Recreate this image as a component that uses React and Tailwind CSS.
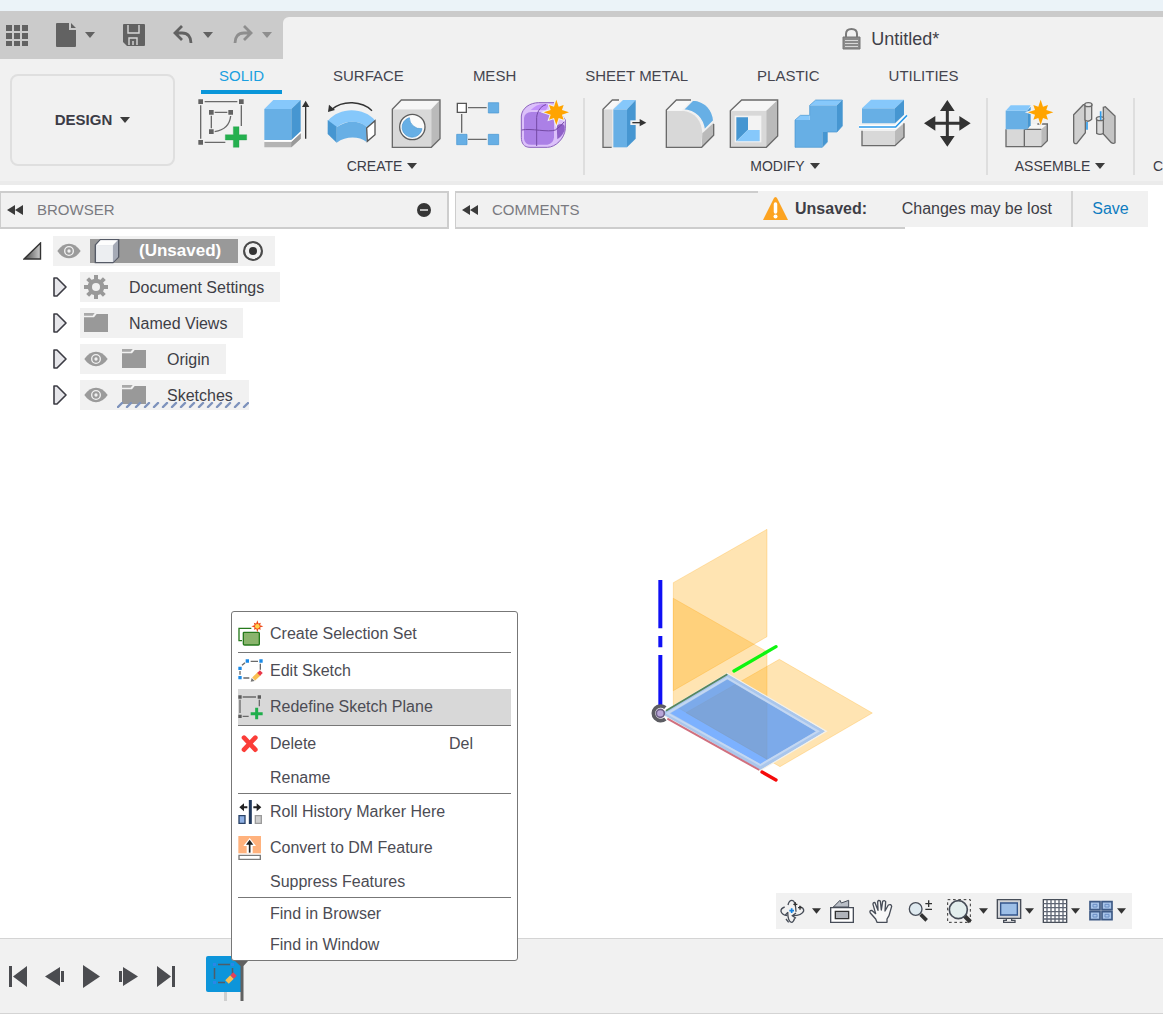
import { useState } from 'react';

const BLUE = '#67afe5';
const BLUE_LIGHT = '#86c8fb';
const BLUE_DARK = '#4696d1';
const EDGE = '#6a6a6a';

function Caret({ className = 'w-[10px] h-[6px] text-[#3c3c3c]' }) {
  return (
    <svg viewBox="0 0 10 6" className={className} aria-hidden="true">
      <path d="M0 0H10L5 6Z" fill="currentColor" />
    </svg>
  );
}

// Large ribbon icon, drawn on a 144 unit grid
function RibbonIcon({ children }) {
  return (
    <svg viewBox="0 0 144 144" className="w-12 h-12 overflow-visible" fill="none" aria-hidden="true">
      {children}
    </svg>
  );
}

// Small icon, drawn on a 72 unit grid
function SmallIcon({ children }) {
  return (
    <svg viewBox="0 0 72 72" className="w-6 h-6 shrink-0 overflow-visible" fill="none" aria-hidden="true">
      {children}
    </svg>
  );
}

function starPoints(cx, cy, outer, inner, spikes) {
  const points = [];
  for (let i = 0; i < spikes * 2; i++) {
    const long = i % 4 === 0 ? outer : outer * 0.82;
    const r = i % 2 === 0 ? long : inner;
    const a = (Math.PI * i) / spikes - Math.PI / 2;
    points.push(`${(cx + r * Math.cos(a)).toFixed(1)},${(cy + r * Math.sin(a)).toFixed(1)}`);
  }
  return points.join(' ');
}

function Star({ cx, cy, r = 38 }) {
  return (
    <polygon
      points={starPoints(cx, cy, r, r * 0.48, 8)}
      fill="#ffa400"
      stroke="#f1f1f1"
      strokeWidth="6"
      paintOrder="stroke"
    />
  );
}

const SketchIcon = () => (
  <RibbonIcon>
    <path
      d="M20 11H118M8 22V122M130 22V84M20 133H82M50 43H88M40 53V91M98 54Q94 94 50 101"
      stroke={EDGE}
      strokeWidth="4"
    />
    <path
      d="M1 4h14v14h-14zM123 4h14v14h-14zM1 126h14v14h-14zM33 36h14v14h-14zM91 36h14v14h-14zM33 94h14v14h-14z"
      fill="#626262"
    />
    <path d="M106 86h17v24h23v16h-23v22h-17v-22h-24v-16h24z" fill="#25b04f" stroke="#1e9a43" strokeWidth="1" />
  </RibbonIcon>
);

const ExtrudeIcon = () => (
  <RibbonIcon>
    <path d="M7 132H88L116 104V122L88 148H7Z" fill="#b4b4b4" />
    <path d="M88 132L116 104V122L88 148Z" fill="#9a9a9a" />
    <path d="M7 128H88L118 101" stroke="#fff" strokeWidth="5" />
    <path d="M7 33H88V126H7Z" fill={BLUE} />
    <path d="M7 33L34 6H116L88 33Z" fill={BLUE_LIGHT} />
    <path d="M88 33L116 6V100L88 126Z" fill={BLUE_DARK} />
    <path d="M131 122V22" stroke="#333" strokeWidth="4" />
    <path d="M131 8L142 27H120Z" fill="#333" />
  </RibbonIcon>
);

const RevolveIcon = () => (
  <RibbonIcon>
    <path d="M138 38C108 8 50 6 18 34" stroke="#333" strokeWidth="4" />
    <path d="M6 42L9 20L27 36Z" fill="#333" />
    <path d="M6 68C40 26 114 26 148 68L124 88C98 66 60 66 32 88Z" fill={BLUE_LIGHT} />
    <path d="M32 88C60 66 98 66 122 86V132C98 114 60 114 32 134Z" fill={BLUE} />
    <path d="M5 66L32 86V134L5 108Z" fill={BLUE_DARK} />
    <path d="M122 90L147 68V110L124 130Z" fill="#fff" stroke="#555" strokeWidth="4" />
  </RibbonIcon>
);

const HoleIcon = () => (
  <RibbonIcon>
    <path d="M7 34H124V148H7Z" fill="#d8d8d8" />
    <path d="M7 34L34 6H150L124 34Z" fill="#f6f6f6" />
    <path d="M124 34L150 6V122L124 148Z" fill="#bababa" />
    <path d="M7 34L34 6H150V122L124 148H7Z" stroke={EDGE} strokeWidth="4" />
    <circle cx="67" cy="87" r="38" fill="#fafafa" stroke="#5c5c5c" strokeWidth="4" />
    <path d="M58 59A30 30 0 1 0 96 92A34 34 0 0 1 58 59Z" fill={BLUE} stroke={BLUE_DARK} strokeWidth="2" />
  </RibbonIcon>
);

const PatternIcon = () => (
  <RibbonIcon>
    <path d="M42 29H98M23 48V104M42 124H98" stroke={EDGE} strokeWidth="4" />
    <path d="M10 16h27v27h-27z" fill="#fff" stroke="#555" strokeWidth="4" />
    <path d="M103 14h31v31h-31zM8 109h31v31h-31zM103 109h31v31h-31z" fill={BLUE} stroke={BLUE_DARK} strokeWidth="2" />
  </RibbonIcon>
);

const FormIcon = () => (
  <RibbonIcon>
    <path
      d="M10 54C12 30 36 14 62 14H108L142 66V92C140 122 112 148 88 148H36C18 148 10 136 10 118Z"
      fill="#dcc1fa"
      stroke="#8b62bd"
      strokeWidth="3"
    />
    <path d="M38 36Q56 18 74 18H94L84 36Z" fill="#c290fb" />
    <path d="M116 82Q138 72 140 86V96Q134 114 118 124Z" fill="#8f60c8" />
    <path d="M18 60Q20 44 40 42H88Q106 44 108 62V118Q106 138 88 140H40Q20 140 18 122Z" fill="#ab80e6" />
    <path d="M56 144V66C54 46 66 24 84 20M11 96C40 90 90 104 112 96Q130 84 138 72" stroke="#744aa4" strokeWidth="3" />
    <Star cx={115} cy={43} />
  </RibbonIcon>
);

const PressPullIcon = () => (
  <RibbonIcon>
    <path d="M6 34H34V148H6Z" fill="#d8d8d8" />
    <path d="M6 34L34 6H58L34 34Z" fill="#f8f8f8" />
    <path d="M54 6H34L6 34V148H32" stroke={EDGE} strokeWidth="4" />
    <path d="M37 34H78V148H37Z" fill={BLUE} />
    <path d="M37 34L66 6H104L78 34Z" fill={BLUE_LIGHT} />
    <path d="M78 34L104 6V122L78 148Z" fill={BLUE_DARK} />
    <path d="M88 74H118" stroke="#f1f1f1" strokeWidth="14" />
    <path d="M94 74H120" stroke="#333" strokeWidth="4" />
    <path d="M136 74L116 63V85Z" fill="#333" />
  </RibbonIcon>
);

const FilletIcon = () => (
  <RibbonIcon>
    <path d="M4 38H52C92 42 110 70 112 106L108 148H4Z" fill="#d8d8d8" />
    <path d="M4 38L34 6H80L52 38Z" fill="#f8f8f8" />
    <path d="M112 106L146 74V112L110 148Z" fill="#bababa" />
    <path d="M78 6H34L4 36V148H110L146 112V78" stroke={EDGE} strokeWidth="4" />
    <path d="M54 36L84 6C122 8 144 38 146 68L118 96C114 62 92 38 54 36Z" fill={BLUE} stroke="#f1f1f1" strokeWidth="4" />
  </RibbonIcon>
);

const ShellIcon = () => (
  <RibbonIcon>
    <path d="M4 38H112V148H4Z" fill="#d8d8d8" />
    <path d="M4 38L38 6H146L112 38Z" fill="#f6f6f6" />
    <path d="M112 38L146 6V114L112 148Z" fill="#bababa" />
    <path d="M4 38L38 6H146V114L112 148H4Z" stroke={EDGE} strokeWidth="4" />
    <path d="M17 53H97V133H17Z" fill="#f3f3f3" />
    <path d="M22 58H57V95L22 130Z" fill={BLUE_DARK} />
    <path d="M22 130L56 96H92V130Z" fill={BLUE_LIGHT} />
  </RibbonIcon>
);

const CombineIcon = () => (
  <RibbonIcon>
    <path d="M6 66H50V22H132V102H88V148H6Z" fill={BLUE} />
    <path d="M50 22L68 6H148L132 22ZM6 66L22 52H50V66Z" fill={BLUE_LIGHT} />
    <path d="M132 22L148 6V84L132 102ZM88 102H103V132L88 148Z" fill={BLUE_DARK} />
    <path d="M6 66L22 52H50V22L68 6H148V84L132 102H103V132L88 148H6Z" stroke={BLUE_DARK} strokeWidth="2" />
  </RibbonIcon>
);

const SplitIcon = () => (
  <RibbonIcon>
    <path d="M15 31H114V76H15Z" fill={BLUE} />
    <path d="M15 31L42 5H141L114 31Z" fill={BLUE_LIGHT} />
    <path d="M114 31L141 5V50L114 76Z" fill={BLUE_DARK} />
    <path d="M6 87H116L150 52" stroke="#fff" strokeWidth="12" />
    <path d="M6 87H116L150 52" stroke="#2f9bea" strokeWidth="5" />
    <path d="M15 99H114V143H15Z" fill="#d8d8d8" />
    <path d="M114 99L141 76V118L114 143Z" fill="#bababa" />
    <path d="M15 98V143H114L141 118V76" stroke={EDGE} strokeWidth="4" />
  </RibbonIcon>
);

const MoveIcon = () => (
  <RibbonIcon>
    <path d="M79 30V122M33 76H125" stroke="#333" strokeWidth="9" />
    <path d="M79 6L101 39H57ZM79 146L101 114H57ZM9 76L43 54V98ZM149 76L115 54V98Z" fill="#333" />
  </RibbonIcon>
);

const ComponentIcon = () => (
  <RibbonIcon>
    <path d="M6 94H60V146H6ZM62 94H112V146H62Z" fill="#d8d8d8" />
    <path d="M62 94L78 78H130L112 94Z" fill="#f6f6f6" />
    <path d="M112 94L130 78V128L112 146Z" fill="#bababa" />
    <path d="M6 94V146H112L130 128V78H100M61 94V146M62 94H112" stroke={EDGE} strokeWidth="4" />
    <path d="M5 38H70V94H5Z" fill={BLUE} />
    <path d="M5 38L20 22H80L70 38Z" fill={BLUE_LIGHT} />
    <path d="M70 38L80 26V82L70 94Z" fill={BLUE_DARK} />
    <Star cx={110} cy={43} />
  </RibbonIcon>
);

const JointIcon = () => (
  <RibbonIcon>
    <path d="M17 50L46 20H52V104L26 137Q17 138 17 130Z" fill="#cfcfcf" stroke={EDGE} strokeWidth="4" />
    <path d="M51 22V66Q61 74 71 64V20Z" fill="#dadada" stroke={EDGE} strokeWidth="4" />
    <ellipse cx="61" cy="20" rx="11" ry="6" fill="#e8e8e8" stroke={EDGE} strokeWidth="4" />
    <path d="M106 28L112 26L141 54V134Q136 138 130 134L106 108Z" fill="#c4c4c4" stroke={EDGE} strokeWidth="4" />
    <path d="M86 64V106Q96 112 106 106V64Z" fill="#dadada" stroke={EDGE} strokeWidth="4" />
    <ellipse cx="96" cy="62" rx="11" ry="6" fill="#e8e8e8" stroke={EDGE} strokeWidth="4" />
    <path d="M57 72V95M98 40V66" stroke="#2f9bea" strokeWidth="5" />
  </RibbonIcon>
);

const tabs = ['SOLID', 'SURFACE', 'MESH', 'SHEET METAL', 'PLASTIC', 'UTILITIES'];

const groups = [
  {
    label: 'CREATE',
    tools: [
      ['Create Sketch', SketchIcon],
      ['Extrude', ExtrudeIcon],
      ['Revolve', RevolveIcon],
      ['Hole', HoleIcon],
      ['Pattern', PatternIcon],
      ['Create Form', FormIcon],
    ],
  },
  {
    label: 'MODIFY',
    tools: [
      ['Press Pull', PressPullIcon],
      ['Fillet', FilletIcon],
      ['Shell', ShellIcon],
      ['Combine', CombineIcon],
      ['Split Body', SplitIcon],
      ['Move', MoveIcon],
    ],
  },
  {
    label: 'ASSEMBLE',
    tools: [
      ['New Component', ComponentIcon],
      ['Joint', JointIcon],
    ],
  },
];

function QuickAccess() {
  return (
    <div className="w-[283px] shrink-0 flex items-center pl-[6px] text-[#626262]">
      <button type="button" aria-label="Show data panel">
        <svg viewBox="0 0 22 22" className="w-[22px] h-[22px]" fill="currentColor">
          <path d="M0 1h6v6h-6zM8 1h6v6h-6zM16 1h6v6h-6zM0 9h6v6h-6zM8 9h6v6h-6zM16 9h6v6h-6zM0 17h6v5h-6zM8 17h6v5h-6zM16 17h6v5h-6z" />
        </svg>
      </button>
      <button type="button" aria-label="File" className="ml-7 flex items-center gap-[9px]">
        <svg viewBox="0 0 20 24" className="w-5 h-6" fill="currentColor">
          <path d="M1 0H13V7H20V23Q20 24 19 24H1Q0 24 0 23V1Q0 0 1 0ZM15 0L20 5H15Z" />
        </svg>
        <Caret className="w-[10px] h-2" />
      </button>
      <button type="button" aria-label="Save file" className="ml-7">
        <svg viewBox="0 0 22 22" className="w-[22px] h-[22px]" fill="currentColor">
          <path d="M1 0H21Q22 0 22 1V21Q22 22 21 22H4L0 18V1Q0 0 1 0Z" />
          <path d="M5 1V9H16V1M6 21V14H14V21" fill="none" stroke="#d8d8d8" strokeWidth="1.4" />
          <path d="M10 17V21" stroke="#d8d8d8" strokeWidth="1.4" />
        </svg>
      </button>
      <button type="button" aria-label="Undo" className="ml-7 flex items-center gap-[10px]">
        <svg viewBox="0 0 20 20" className="w-5 h-5" fill="none" stroke="currentColor" strokeWidth="2.8">
          <path d="M9 1L2 8L9 15M2 8H9C15 8 18 12 18 18" />
        </svg>
        <Caret className="w-[10px] h-2" />
      </button>
      <button type="button" aria-label="Redo" className="ml-5 flex items-center gap-[9px] text-[#8e8e8e]">
        <svg viewBox="0 0 20 20" className="w-5 h-5" fill="none" stroke="currentColor" strokeWidth="2.8">
          <path d="M11 1L18 8L11 15M18 8H11C5 8 2 12 2 18" />
        </svg>
        <Caret className="w-[10px] h-2" />
      </button>
    </div>
  );
}

function TitleBar() {
  return (
    <div className="flex h-12 bg-[#cbcbcb]">
      <QuickAccess />
      <div className="flex-1 mt-[6px] bg-[#f1f1f1] rounded-tl-md flex items-center pb-0.5 pt-1">
        <div className="flex-[5]" />
        <div className="flex items-center gap-[10px] text-[#404048] text-[18px] leading-6">
          <svg viewBox="0 0 19 22" className="w-[19px] h-[22px]" fill="none" aria-hidden="true">
            <path d="M4 10V6Q4 1 9.500 1Q15 1 15 6V10" stroke="#7a7a7a" strokeWidth="2" />
            <path d="M1 9H18V21H1Z" fill="#8a8a8a" stroke="#767676" />
            <path d="M3 12.500H16M3 15.500H16M3 18.500H16" stroke="#d8d8d8" />
          </svg>
          <h1>Untitled*</h1>
        </div>
        <div className="flex-[2]" />
      </div>
    </div>
  );
}

function Ribbon() {
  const [activeTab, setActiveTab] = useState('SOLID');

  return (
    <div className="flex h-[122px] overflow-hidden">
      <button
        type="button"
        className="ml-[10px] mt-[15px] w-[165px] h-[92px] shrink-0 border-2 border-[#dfdfdf] rounded-lg flex items-center justify-center gap-2 text-[15px] font-bold text-[#3c3c46]"
      >
        DESIGN
        <Caret />
      </button>
      <div className="ml-[23px] min-w-0">
        <div role="tablist" className="flex gap-[33px] ml-[3px] h-[35px] whitespace-nowrap">
          {tabs.map((tab) => (
            <button
              key={tab}
              type="button"
              role="tab"
              aria-selected={tab === activeTab}
              onClick={() => setActiveTab(tab)}
              className={
                tab === activeTab
                  ? 'px-[18px] pt-1 text-[15px] text-[#1a9fe0] border-b-4 border-[#0a96d9]'
                  : 'px-[18px] pt-1 text-[15px] text-[#45454f] border-b-4 border-transparent'
              }
            >
              {tab}
            </button>
          ))}
        </div>
        <div className="flex mt-1 text-[14px] leading-4 text-[#3c3c46]">
          {groups.map(({ label, tools }) => (
            <div key={label} className="flex shrink-0">
              <div className="flex flex-col items-center">
                <div className="flex gap-4">
                  {tools.map(([name, Icon]) => (
                    <button key={name} type="button" aria-label={name}>
                      <Icon />
                    </button>
                  ))}
                </div>
                <button type="button" className="mt-3 flex items-center gap-[5px]">
                  {label}
                  <Caret />
                </button>
              </div>
              <div className="w-[2px] h-[77px] ml-[17px] mr-4 bg-[#dedede]" />
            </div>
          ))}
          <button type="button" className="mt-[60px] ml-0.5 self-start flex items-center gap-[5px]">
            CONSTRUCT
            <Caret />
          </button>
        </div>
      </div>
    </div>
  );
}

function CollapseIcon() {
  return (
    <svg viewBox="0 0 16 10" className="w-4 h-[10px]" fill="#3a3a3a" aria-hidden="true">
      <path d="M8 0V10L0 5ZM16 0V10L8 5Z" />
    </svg>
  );
}

function PanelBar() {
  return (
    <div className="relative flex gap-[6px] h-[38px] text-[15px] text-[#7a7a80]">
      <div className="w-[449px] shrink-0 flex items-center gap-[14px] pl-[6px] pr-[16px] bg-[#f1f1f1] border-2 border-l border-[#cdcdcd]">
        <button type="button" aria-label="Collapse browser">
          <CollapseIcon />
        </button>
        <h2>BROWSER</h2>
        <button type="button" aria-label="Hide browser" className="ml-auto">
          <svg viewBox="0 0 14 14" className="w-[14px] h-[14px]">
            <circle cx="7" cy="7" r="7" fill="#363636" />
            <path d="M3 7H11" stroke="#e8e8e8" strokeWidth="1.500" />
          </svg>
        </button>
      </div>
      <div className="w-[450px] shrink-0 flex items-center gap-[14px] pl-[6px] bg-[#f1f1f1] border-2 border-l border-[#cdcdcd]">
        <button type="button" aria-label="Collapse comments">
          <CollapseIcon />
        </button>
        <h2>COMMENTS</h2>
      </div>
      {/* Save reminder, floats over the comments bar */}
      <div className="absolute right-[15px] top-0 h-9 w-[390px] bg-[#f1f1f1] flex items-center pl-1 text-[16px] text-[#3e3e46] whitespace-nowrap">
        <svg viewBox="0 0 27 24" className="w-[27px] h-6" aria-hidden="true">
          <path d="M13.500 0Q15 0 16 3L26 23H1L11 3Q12 0 13.500 0Z" fill="#fca321" />
          <path d="M13.500 7V15" stroke="#fff" strokeWidth="3.500" strokeLinecap="round" />
          <circle cx="13.500" cy="19.500" r="2" fill="#fff" />
        </svg>
        <strong className="ml-[6px]">Unsaved:</strong>
        <span className="ml-auto">Changes may be lost</span>
        <button type="button" className="ml-[19px] h-9 w-[77px] border-l-2 border-[#d4d4d4] text-[#0e7cc0]">
          Save
        </button>
      </div>
    </div>
  );
}

function EyeIcon() {
  return (
    <SmallIcon>
      <path d="M1 36Q16 14 36 14Q56 14 71 36Q56 58 36 58Q16 58 1 36Z" fill="#9b9b9b" />
      <circle cx="36" cy="36" r="13" fill="#9b9b9b" stroke="#f1f1f1" strokeWidth="4" />
      <circle cx="36" cy="36" r="5" fill="#f1f1f1" />
    </SmallIcon>
  );
}

function FolderIcon() {
  return (
    <SmallIcon>
      <path d="M0 6H32L26 14H0Z" fill="#a9a9a9" />
      <path d="M0 19H30L38 9H72V63H0Z" fill="#999" />
    </SmallIcon>
  );
}

function GearIcon() {
  return (
    <SmallIcon>
      <g stroke="#999" strokeWidth="12">
        <path d="M36 0V72M0 36H72M11 11L61 61M61 11L11 61" />
      </g>
      <circle cx="36" cy="36" r="25" fill="#999" />
      <circle cx="36" cy="36" r="12" fill="#f1f1f1" />
    </SmallIcon>
  );
}

function ExpandArrow() {
  return (
    <svg viewBox="0 0 14 20" className="w-[14px] h-5" aria-hidden="true">
      <path d="M1 1H4L13 10L4 19H1Z" fill="#e6e6ea" stroke="#3c3c44" strokeWidth="1.600" strokeLinejoin="round" />
    </svg>
  );
}

const treeItems = [
  { label: 'Document Settings', Icon: GearIcon },
  { label: 'Named Views', Icon: FolderIcon },
  { label: 'Origin', Icon: FolderIcon, eye: true },
  { label: 'Sketches', Icon: FolderIcon, eye: true, hatched: true },
];

function BrowserTree() {
  return (
    <ul className="mt-[7px] flex flex-col gap-[6px] text-[16px] text-[#3e3e46] whitespace-nowrap">
      <li className="flex items-center h-[30px] pl-[23px]">
        <button type="button" aria-label="Collapse (Unsaved)" className="mr-[11px]">
          <svg viewBox="0 0 19 18" className="w-[19px] h-[18px]">
            <defs>
              <linearGradient id="treeArrow" x1="0" y1="0" x2="1" y2="0">
                <stop offset="0" stopColor="#444" />
                <stop offset="1" stopColor="#ccc" />
              </linearGradient>
            </defs>
            <path d="M17.500 1V17H1Z" fill="url(#treeArrow)" stroke="#333" strokeWidth="1.400" />
          </svg>
        </button>
        <div className="flex items-center h-[30px] pl-1 pr-3 bg-[#f1f1f1]">
          <button type="button" aria-label="Toggle (Unsaved)">
            <EyeIcon />
          </button>
          <div className="ml-[9px] w-[148px] h-6 pl-[5px] flex items-center gap-[20px] bg-[#999] text-[17px] font-bold text-white">
            <SmallIcon>
              <path d="M1 18L16 2H71V54L54 71H1Z" fill="#dcdfe6" stroke="#555a66" strokeWidth="4" />
              <path d="M3 19L17 4H67L54 19Z" fill="#fdfdfd" />
              <path d="M4 19H53V69H4Z" fill="#eceef1" />
              <path d="M54 19L69 4V53L54 69Z" fill="#a5aab6" />
            </SmallIcon>
            (Unsaved)
          </div>
          <input
            type="radio"
            name="activeComponent"
            aria-label="Activate component"
            defaultChecked
            className="appearance-none ml-[5px] w-5 h-5 rounded-full border-2 border-[#4a4a4a] checked:bg-[#333] checked:shadow-[inset_0_0_0_4px_#f1f1f1]"
          />
        </div>
      </li>
      {treeItems.map(({ label, Icon, eye, hatched }) => (
        <li key={label} className="flex items-center h-[30px] pl-[53px] gap-[13px]">
          <button type="button" aria-label={`Expand ${label}`}>
            <ExpandArrow />
          </button>
          <div className="relative flex items-center h-[30px] pl-1 pr-4 bg-[#f1f1f1]">
            {eye && (
              <button type="button" aria-label={`Toggle ${label}`} className="mr-[14px]">
                <EyeIcon />
              </button>
            )}
            <Icon />
            <span className="ml-[21px] pt-0.5">{label}</span>
            {hatched && (
              <svg viewBox="0 0 132 6" className="absolute left-[37px] bottom-[2px] w-[132px] h-[6px]">
                {Array.from({ length: 15 }, (_, i) => (
                  <path key={i} d={`M${i * 9 + 1} 5L${i * 9 + 5} 1`} stroke="#7d92bc" strokeWidth="2.400" strokeLinecap="round" />
                ))}
              </svg>
            )}
          </div>
        </li>
      ))}
    </ul>
  );
}

// Origin planes, axes and the highlighted sketch profile
function OriginScene() {
  return (
    <svg viewBox="0 0 750 810" className="absolute left-[640px] top-[335px] w-[250px] h-[270px]" fill="none">
      <g fill="#ffa500" fillOpacity="0.300" stroke="#ffa500" strokeOpacity="0.250" strokeWidth="3">
        <path d="M100 188L381 28V350L100 512Z" />
        <path d="M100 235L381 395V718L100 555Z" />
        <path d="M138 578L418 418L697 579L420 740Z" />
      </g>
      <path d="M61 180V325M61 348V382M61 405V560" stroke="#1010f5" strokeWidth="12" />
      <path d="M68 580L262 464L553 634L360 748Z" stroke="#f4f1e8" strokeWidth="10" />
      <path d="M68 580L262 464L553 634L360 748Z" fill="#4a93ff" fillOpacity="0.720" />
      <path d="M78 580L262 470L541 634L361 741Z" stroke="#a9c6ec" strokeWidth="14" />
      <path d="M82 580L262 474L534 634L361 735Z" stroke="#c3d7f2" strokeWidth="6" />
      <path d="M78 572L262 463" stroke="#55865e" strokeWidth="5" />
      <path d="M82 596L358 750" stroke="#d0707f" strokeWidth="6" />
      <path d="M282 453L408 380" stroke="#0ff50f" strokeWidth="10" strokeLinecap="round" />
      <path d="M366 756L408 780" stroke="#f50a0a" strokeWidth="10" strokeLinecap="round" />
      <path d="M76 563A22 22 0 1 0 76 597" stroke="#5c5c62" strokeWidth="11" />
      <circle cx="61" cy="580" r="12" fill="#b9a6d8" stroke="#6d5f86" strokeWidth="5" />
    </svg>
  );
}

const NAV = '#474d58';

const navTools = [
  {
    name: 'Orbit',
    className: 'flex items-center gap-2',
    caret: true,
    art: (
      <>
        <path d="M24 18Q27 4 36 4Q47 4 48 38M44 58Q40 70 35 70Q24 70 23 40" stroke={NAV} strokeWidth="4" />
        <path d="M14 24Q2 28 3 37Q6 48 22 50M58 22Q72 26 71 36Q66 50 38 50" stroke={NAV} strokeWidth="4" />
        <path d="M48 42L37 50L48 58M16 48L24 40M18 60L26 70" stroke={NAV} strokeWidth="4" />
        <path d="M40 16H52M46 10V22M54 26H66M60 20V32" stroke="#333" strokeWidth="4" />
        <path d="M28 35H42M35 28V42" stroke="#1683e0" strokeWidth="5" />
      </>
    ),
  },
  {
    name: 'Look At',
    className: 'pr-1.5',
    art: (
      <>
        <path d="M10 24L30 4L34 12L56 4V24Z" fill="#b9bec6" stroke={NAV} strokeWidth="3" />
        <path d="M2 26H70V70H2Z" fill="#fff" stroke={NAV} strokeWidth="4" />
        <path d="M16 37H56V59H16Z" fill="#b0b3b9" stroke="#333" strokeWidth="4" />
      </>
    ),
  },
  {
    name: 'Pan',
    className: 'pr-1.5',
    art: (
      <path
        d="M24 70L20 60L4 42Q0 34 8 34L20 44L12 16Q12 9 18 11L27 34L26 8Q28 2 34 6L37 33L41 7Q46 2 50 8L48 36L58 18Q66 14 68 22L60 50L54 60V70Z"
        fill="#f8f8f8"
        stroke={NAV}
        strokeWidth="4"
        strokeLinejoin="round"
      />
    ),
  },
  {
    name: 'Zoom',
    className: 'pr-1.5',
    art: (
      <>
        <path d="M38 46L56 64" stroke="#333" strokeWidth="11" />
        <circle cx="23" cy="30" r="19" fill="#dfeaf0" stroke={NAV} strokeWidth="4" />
        <path d="M52 14H72M62 4V24M52 31H72" stroke="#333" strokeWidth="4" />
      </>
    ),
  },
  {
    name: 'Zoom Window',
    className: 'flex items-center gap-2',
    caret: true,
    art: (
      <>
        <path d="M2 2H70V70H2Z" stroke="#333" strokeWidth="3" strokeDasharray="8 8" />
        <path d="M52 50L70 68" stroke="#333" strokeWidth="13" />
        <circle cx="34" cy="32" r="27" fill="#e3eeee" stroke={NAV} strokeWidth="5" />
      </>
    ),
  },
  {
    name: 'Display Settings',
    className: 'flex items-center gap-1',
    caret: true,
    art: (
      <>
        <path d="M1 2H71V58H1Z" fill="#d2d4d8" stroke={NAV} strokeWidth="4" />
        <path d="M11 12H61V48H11Z" fill="#9dbfe8" stroke="#34568c" strokeWidth="4" />
        <path d="M28 58V64H20V70H54V64H44V58" stroke={NAV} strokeWidth="4" />
      </>
    ),
  },
  {
    name: 'Grid and Snaps',
    className: 'flex items-center gap-1',
    caret: true,
    art: (
      <>
        <path d="M1 2H71V70H1Z" fill="#fff" stroke={NAV} strokeWidth="4" />
        <path d="M12 2V70M24 2V70M36 2V70M48 2V70M60 2V70M1 14H71M1 26H71M1 38H71M1 50H71M1 60H71" stroke="#5f6674" strokeWidth="4" />
      </>
    ),
  },
  {
    name: 'Viewports',
    className: 'flex items-center gap-1',
    caret: true,
    art: (
      <>
        <path d="M3 8H33V32H3ZM39 8H69V32H39ZM3 38H33V62H3ZM39 38H69V62H39Z" fill="#a9c5ea" stroke="#3e5a85" strokeWidth="5" />
        <path d="M12 16H24V24H12ZM48 16H60V24H48ZM12 46H24V54H12ZM48 46H60V54H48Z" stroke="#6b8fc4" strokeWidth="3" />
      </>
    ),
  },
];

function NavigationBar() {
  return (
    <div className="mt-auto ml-auto mr-[31px] mb-[9px] h-9 pl-1 pr-[6px] flex items-center gap-[9px] bg-[#f1f1f1]">
      {navTools.map(({ name, className, caret, art }) => (
        <button key={name} type="button" aria-label={name} className={className}>
          <SmallIcon>{art}</SmallIcon>
          {caret && <Caret className="w-[9px] h-[6px] text-[#333]" />}
        </button>
      ))}
    </div>
  );
}

const menuIcons = {
  selection: (
    <>
      <path d="M40 19H3V56H12" stroke="#267a1c" strokeWidth="4" />
      <path d="M16 33Q16 31 18 31H61Q64 31 64 34V66Q64 69 61 69H20Q16 69 16 66Z" fill="#8ab46c" stroke="#267a1c" strokeWidth="4" />
      <polygon points={starPoints(58, 13, 18, 9, 8)} fill="#ee4a17" />
      <circle cx="58" cy="13" r="7" fill="#ffd34d" />
    </>
  ),
  edit: (
    <>
      <path d="M38 7H60M67 14V32M12 19L21 11M6 36V47M16 57H34" stroke="#6a6a6a" strokeWidth="4" />
      <path d="M23 1h10v10h-10zM64 1h10v10h-10zM1 23h10v10h-10zM1 51h10v10h-10z" fill="#1c8ae6" />
      <path d="M47 60L64 44" stroke="#f9bf52" strokeWidth="13" />
      <path d="M62 46L70 38" stroke="#e8384a" strokeWidth="12" />
      <path d="M38 68L41 57L50 66Z" fill="#777" />
    </>
  ),
  redefine: (
    <>
      <path d="M14 6H54M6 14V54M64 14V34M14 64H32" stroke="#6a6a6a" strokeWidth="4" />
      <path d="M1 1h10v10h-10zM59 1h10v10h-10zM1 59h10v10h-10z" fill="#5c5c5c" />
      <path d="M56 38V73M38 56H74" stroke="#1fae4b" strokeWidth="9" />
    </>
  ),
  delete: <path d="M18 17L52 53M52 17L18 53" stroke="#fb3d38" strokeWidth="14" strokeLinecap="round" />,
  roll: (
    <>
      <path d="M37 0V72" stroke="#223a5e" strokeWidth="9" />
      <path d="M12 22H28M46 22H62" stroke="#222" strokeWidth="6" />
      <path d="M4 22L18 10V34ZM70 22L56 10V34Z" fill="#222" />
      <path d="M3 47H21V70H3Z" fill="#8fb0e4" stroke="#2b4368" strokeWidth="4" />
      <path d="M52 47H70V70H52Z" fill="#cfcfcf" stroke="#9b9b9b" strokeWidth="4" />
    </>
  ),
  convert: (
    <>
      <path d="M1 0H69V52H1Z" fill="#ffb27d" />
      <path d="M35 6L54 30H44V52H26V30H16Z" fill="#fff" />
      <path d="M35 20V50" stroke="#222" strokeWidth="5" />
      <path d="M35 11L46 26H24Z" fill="#222" />
      <path d="M3 58H67V70H3Z" fill="#fff" stroke="#7b7b7b" strokeWidth="4" />
    </>
  ),
};

const menuSections = [
  [{ label: 'Create Selection Set', icon: 'selection' }],
  [
    { label: 'Edit Sketch', icon: 'edit' },
    { label: 'Redefine Sketch Plane', icon: 'redefine', active: true },
  ],
  [{ label: 'Delete', icon: 'delete', shortcut: 'Del' }, { label: 'Rename' }],
  [
    { label: 'Roll History Marker Here', icon: 'roll' },
    { label: 'Convert to DM Feature', icon: 'convert' },
    { label: 'Suppress Features' },
  ],
  [{ label: 'Find in Browser' }, { label: 'Find in Window' }],
];

function itemClass({ icon, active }) {
  if (active) return 'w-full h-9 flex items-center gap-2 bg-[#d8d8d8]';
  return icon ? 'w-full h-9 flex items-center gap-2' : 'w-full h-[31px] flex items-center pl-8';
}

function ContextMenu() {
  return (
    <div
      role="menu"
      className="absolute left-[231px] bottom-[53px] w-[287px] px-[6px] pt-1 bg-white border border-[#777] rounded-[3px] text-[16px] text-[#4c4c54] whitespace-nowrap"
    >
      {menuSections.map((items, i) => (
        <div key={items[0].label} className={i > 0 ? 'border-t border-[#777]' : ''}>
          {items.map((item) => (
            <button key={item.label} type="button" role="menuitem" className={itemClass(item)}>
              {item.icon && <SmallIcon>{menuIcons[item.icon]}</SmallIcon>}
              <span>{item.label}</span>
              {item.shortcut && <span className="ml-auto pr-[38px]">{item.shortcut}</span>}
            </button>
          ))}
        </div>
      ))}
    </div>
  );
}

const playback = [
  ['Go to start', 'M1 1H4V22H1ZM19 1V22L5 11.500Z'],
  ['Step back', 'M15 2V21L0 11.500ZM16 6H19V17H16Z'],
  ['Play', 'M1 0L18 11.500L1 23Z'],
  ['Step forward', 'M0 6H3V17H0ZM4 2L19 11.500L4 21Z'],
  ['Go to end', 'M1 1L15 11.500L1 22ZM16 1H19V22H16Z'],
];

function Timeline() {
  return (
    <footer className="h-[76px] shrink-0 flex items-center pl-2 bg-[#f1f1f1] border-y border-[#d4d4d4]">
      <div className="flex gap-[17px] text-[#4b4c50]">
        {playback.map(([name, d]) => (
          <button key={name} type="button" aria-label={name}>
            <svg viewBox="0 0 20 23" className="w-5 h-[23px]" fill="currentColor">
              <path d={d} />
            </svg>
          </button>
        ))}
      </div>
      <button type="button" aria-label="Sketch1" className="ml-[30px] self-start mt-[17px]">
        <svg viewBox="0 0 42 46" className="w-[42px] h-[46px]" fill="none">
          <path d="M19.500 36V45" stroke="#cfcfcf" strokeWidth="3" />
          <path d="M2 0H35V36H2Q0 36 0 34V2Q0 0 2 0Z" fill="#0d95da" />
          <path d="M12 8.500H24M8.500 12V23M26.500 12V18M12 26.500H19" stroke="#4f5d68" strokeWidth="1.500" />
          <path d="M7 7h3v3h-3zM25 7h3v3h-3zM7 25h3v3h-3z" fill="#2b86e8" />
          <path d="M21 26L26 21" stroke="#f9bf52" strokeWidth="5" />
          <path d="M26 21L29 18" stroke="#e0405a" strokeWidth="5" />
          <path d="M29 5H42L37.500 10V45H34.500V10Z" fill="#616161" />
        </svg>
      </button>
    </footer>
  );
}

export default function App() {
  return (
    <div className="relative min-h-screen flex flex-col overflow-hidden bg-white font-['Liberation_Sans',Arial,sans-serif]">
      <header className="shrink-0 bg-[#f1f1f1] border-b-4 border-[#ebebeb]">
        <div className="h-[11px] bg-[#ebf3f8]" />
        <TitleBar />
        <Ribbon />
      </header>
      <main className="relative flex-1 flex flex-col pt-[6px]">
        <PanelBar />
        <BrowserTree />
        <OriginScene />
        <NavigationBar />
      </main>
      <Timeline />
      <ContextMenu />
    </div>
  );
}
